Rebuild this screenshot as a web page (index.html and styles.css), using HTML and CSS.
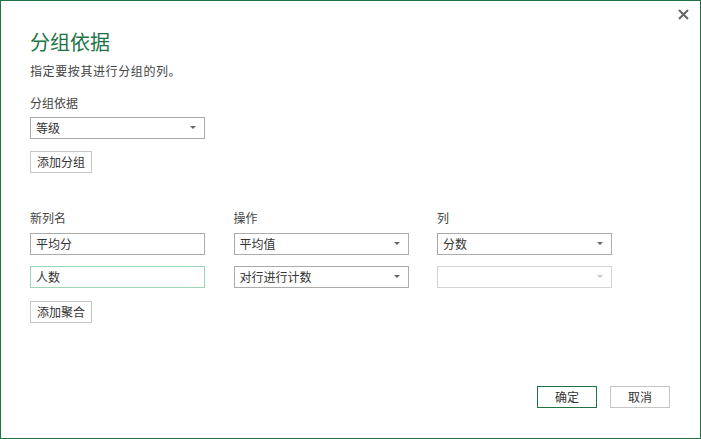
FILE: index.html
```html
<!DOCTYPE html>
<html lang="zh-CN">
<head>
<meta charset="utf-8">
<title>分组依据</title>
<link rel="stylesheet" href="styles.css">
</head>
<body>
<div class="dialog">
  <button class="close" aria-label="关闭">
    <svg width="11" height="11" viewBox="0 0 11 11"><path d="M1 1 L10 10 M10 1 L1 10" stroke="#666" stroke-width="2" fill="none"/></svg>
  </button>
  <h1 class="title">分组依据</h1>
  <p class="subtitle">指定要按其进行分组的列。</p>
  <div class="label">分组依据</div>
  <div class="select wide">等级<span class="arrow"></span></div>
  <button class="btn add-group">添加分组</button>

  <div class="grid">
    <div class="label">新列名</div>
    <div class="label">操作</div>
    <div class="label">列</div>
    <div class="input row1">平均分</div>
    <div class="select row1">平均值<span class="arrow"></span></div>
    <div class="select row1">分数<span class="arrow"></span></div>
    <div class="input focus row2">人数</div>
    <div class="select row2">对行进行计数<span class="arrow"></span></div>
    <div class="select disabled row2"><span class="arrow"></span></div>
  </div>
  <button class="btn add-agg">添加聚合</button>

  <div class="footer">
    <button class="btn primary">确定</button>
    <button class="btn">取消</button>
  </div>
</div>
</body>
</html>
```

FILE: styles.css
```css
html, body {
  margin: 0;
  padding: 0;
  background: #fff;
}
body {
  font-family: "Noto Sans CJK SC", "Noto Sans", sans-serif;
  font-size: 12px;
  color: #444;
}
.dialog {
  position: relative;
  box-sizing: border-box;
  width: 701px;
  height: 439px;
  border: 1px solid #217346;
  padding: 28px 30px 0 29px;
  display: flex;
  flex-direction: column;
  align-items: flex-start;
}
.close {
  position: absolute;
  top: 8px;
  right: 11px;
  width: 11px;
  height: 11px;
  padding: 0;
  border: 0;
  background: none;
  line-height: 0;
}
.title {
  margin: 0;
  font-size: 20px;
  line-height: 26px;
  font-weight: normal;
  color: #217346;
}
.subtitle {
  margin: 8px 0 0 0;
  font-size: 12px;
  line-height: 16px;
  letter-spacing: 0.6px;
}
.label {
  line-height: 16px;
}
.dialog > .label {
  margin-top: 16px;
}
.select, .input {
  position: relative;
  box-sizing: border-box;
  height: 22px;
  width: 175px;
  border: 1px solid #ababab;
  padding: 0 5px;
  line-height: 20px;
  color: #333;
  background: #fff;
}
.select.wide {
  margin-top: 6px;
}
.arrow {
  position: absolute;
  right: 8px;
  top: 8px;
  width: 0;
  height: 0;
  border-left: 3px solid transparent;
  border-right: 3px solid transparent;
  border-top: 3px solid #666;
}
.select.disabled {
  border-color: #d4d4d4;
}
.select.disabled .arrow {
  border-top-color: #c8c8c8;
}
.input.focus {
  border-color: #9dd6b6;
}
.btn {
  box-sizing: border-box;
  height: 22px;
  width: 62px;
  padding: 0;
  border: 1px solid #c6c6c6;
  background: #fff;
  font-family: inherit;
  font-size: 12px;
  color: #333;
  line-height: 20px;
}
.add-group {
  margin-top: 12px;
}
.grid {
  margin-top: 37px;
  display: grid;
  grid-template-columns: 175px 175px 175px;
  column-gap: 28.5px;
  grid-template-rows: 16px 29px 33px;
}
.grid .row1 {
  margin-top: 7px;
}
.grid .row2 {
  margin-top: 11px;
}
.add-agg {
  margin-top: 13px;
}
.footer {
  margin-top: auto;
  margin-bottom: 30px;
  align-self: flex-end;
  display: flex;
  gap: 13px;
}
.footer .btn {
  width: 60px;
}
.btn.primary {
  border-color: #217346;
}
```
